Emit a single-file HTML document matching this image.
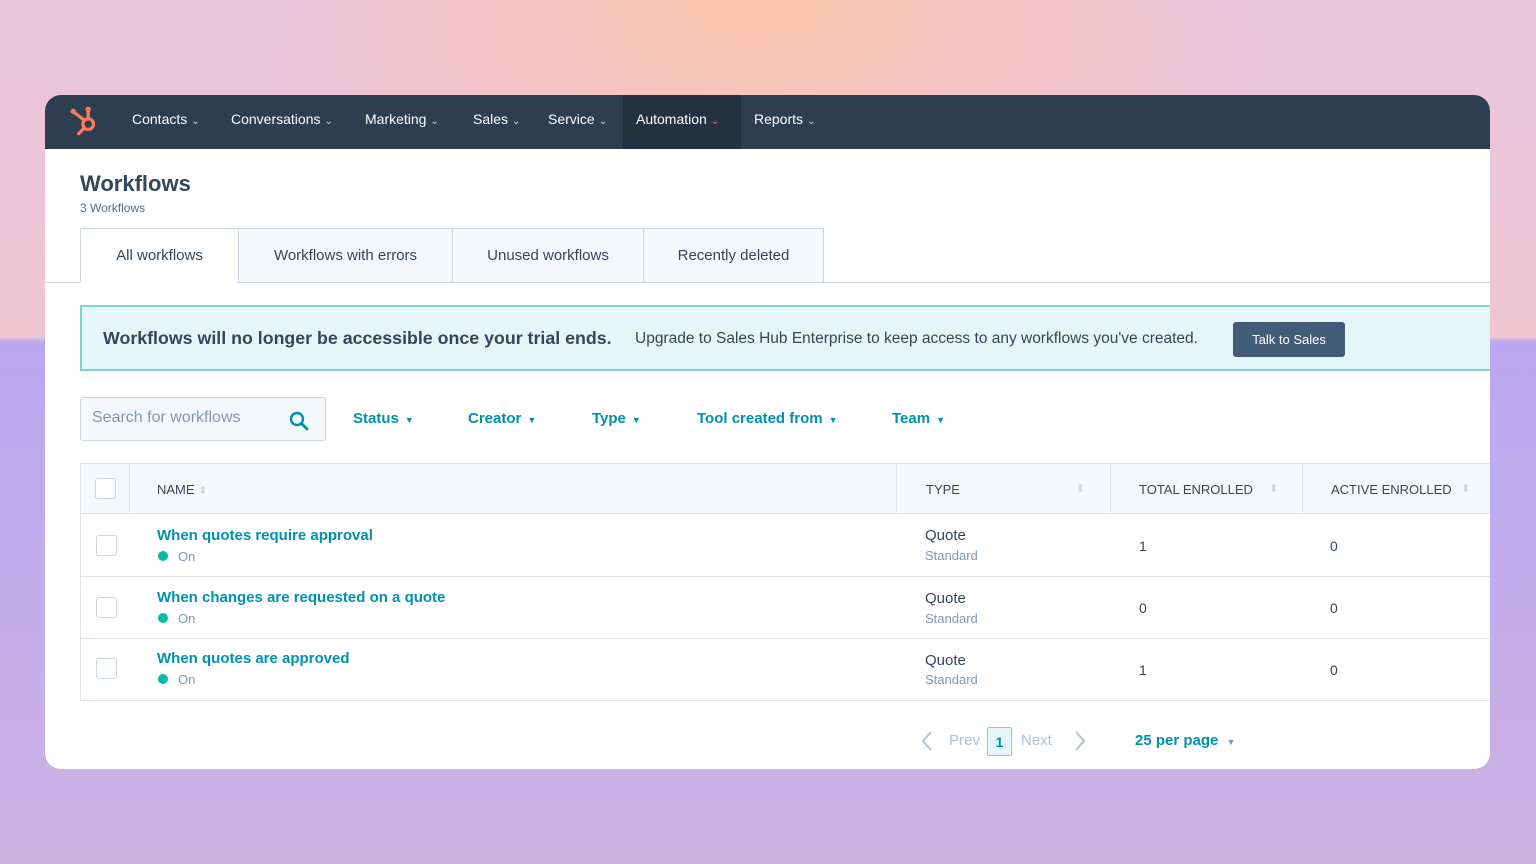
<!DOCTYPE html>
<html><head><meta charset="utf-8"><style>
*{margin:0;padding:0;box-sizing:border-box}
body{width:1536px;height:864px;overflow:hidden;font-family:"Liberation Sans",sans-serif;position:relative;
background:linear-gradient(180deg,#e9c4dc 0%,#efc6d2 39%,#b9a8f0 39.6%,#c3acea 70%,#cdb2e2 100%);}
.topglow{position:absolute;left:0;top:0;width:1536px;height:342px;background:radial-gradient(ellipse 520px 300px at 760px 0,#fcc7a8 0%,rgba(248,196,180,0.6) 45%,rgba(233,196,220,0) 100%);}
.a{position:absolute}
.card{left:45px;top:95px;width:1445px;height:674px;background:#fff;border-radius:16px;overflow:hidden}
.nav{left:0;top:0;width:1445px;height:54px;background:#2d3e50}
.nav span{position:absolute;top:16px;color:#fff;font-size:14px}
.nav span i{font-style:normal;font-size:10px;color:#cbd6e2;margin-left:4px}
.tab{top:133px;height:55px;border:1px solid #cbd6e2;background:#f5f8fa;color:#33475b;font-size:15px;display:flex;align-items:center;justify-content:center}
.th{font-size:13px;color:#33475b;top:387px}
.cb{width:21px;height:21px;border:1px solid #cbd6e2;border-radius:3px;background:#fff}
.row{left:35px;width:1410px;border-bottom:1px solid #dfe3eb}
.nm{font-size:15px;color:#0091ae;font-weight:bold}
.on{font-size:13px;color:#7c98b6}
.dot{display:inline-block;width:10px;height:10px;border-radius:50%;background:#00bda5;margin-right:10px}
.q{font-size:15px;color:#33475b}
.st{font-size:13px;color:#7c98b6}
.num{font-size:14px;color:#33475b}
.f{top:315px;font-size:15px;color:#0091ae;font-weight:bold}
.f i{font-style:normal;font-size:9px;margin-left:6px}
.so{color:#cbd6e2;font-size:11px}
</style></head><body>
<div class="topglow"></div>
<div class="a card">
 <div class="a nav">
  <svg class="a" style="left:23px;top:9px" width="34" height="34" viewBox="0 0 32 32"><g fill="none" stroke="#ff7a59" stroke-width="3" stroke-linecap="round"><circle cx="19" cy="19" r="5"/><path d="M19 14V6M15 15 6 8M15 23l-5 5"/></g><circle cx="19" cy="5" r="2.5" fill="#ff7a59"/><circle cx="5" cy="7" r="2.5" fill="#ff7a59"/></svg>
  <span style="left:87px">Contacts<i>⌄</i></span>
  <span style="left:186px">Conversations<i>⌄</i></span>
  <span style="left:320px">Marketing<i>⌄</i></span>
  <span style="left:428px">Sales<i>⌄</i></span>
  <span style="left:503px">Service<i>⌄</i></span>
  <div class="a" style="left:578px;top:0;width:118px;height:54px;background:#233140"></div>
  <span style="left:591px">Automation<i style="color:#ff7a59">⌄</i></span>
  <span style="left:709px">Reports<i>⌄</i></span>
 </div>
 <div class="a" style="left:35px;top:76px;font-size:22px;color:#33475b;font-weight:600">Workflows</div>
 <div class="a" style="left:35px;top:106px;font-size:12px;color:#516f90">3 Workflows</div>
 <div class="a" style="left:0;top:187px;width:1445px;height:1px;background:#cbd6e2"></div>
 <div class="a tab" style="left:35px;width:159px;background:#fff;border-bottom:1px solid #fff">All workflows</div>
 <div class="a tab" style="left:193px;width:215px">Workflows with errors</div>
 <div class="a tab" style="left:407px;width:192px">Unused workflows</div>
 <div class="a tab" style="left:598px;width:181px">Recently deleted</div>
 <div class="a" style="left:35px;top:210px;width:1420px;height:66px;background:#e5f5f8;border:2px solid #7fd1de;border-right:none"></div>
 <div class="a" style="left:58px;top:233px;font-size:17.8px;font-weight:bold;color:#33475b">Workflows will no longer be accessible once your trial ends.</div>
 <div class="a" style="left:590px;top:235px;font-size:15.5px;color:#33475b">Upgrade to Sales Hub Enterprise to keep access to any workflows you've created.</div>
 <div class="a" style="left:1188px;top:227px;width:112px;height:35px;background:#425b76;border-radius:3px;color:#fff;font-size:13px;display:flex;align-items:center;justify-content:center">Talk to Sales</div>
 <div class="a" style="left:35px;top:302px;width:246px;height:44px;border:1px solid #cbd6e2;border-radius:3px;background:#f5f8fa"></div>
 <div class="a" style="left:47px;top:314px;font-size:16px;color:#7c98b6">Search for workflows</div>
 <svg class="a" style="left:244px;top:316px" width="20" height="20" viewBox="0 0 20 20"><circle cx="8" cy="8" r="6" fill="none" stroke="#0091ae" stroke-width="2.4"/><path d="M12.5 12.5 18 18" stroke="#0091ae" stroke-width="2.8" stroke-linecap="round"/></svg>
 <div class="a f" style="left:308px">Status<i>▼</i></div>
 <div class="a f" style="left:423px">Creator<i>▼</i></div>
 <div class="a f" style="left:547px">Type<i>▼</i></div>
 <div class="a f" style="left:652px">Tool created from<i>▼</i></div>
 <div class="a f" style="left:847px">Team<i>▼</i></div>
 <div class="a" style="left:35px;top:368px;width:1410px;height:51px;background:#f5f8fa;border:1px solid #dfe3eb;border-right:none"></div>
 <div class="a" style="left:84px;top:369px;width:1px;height:49px;background:#dfe3eb"></div>
 <div class="a" style="left:851px;top:369px;width:1px;height:49px;background:#dfe3eb"></div>
 <div class="a" style="left:1065px;top:369px;width:1px;height:49px;background:#dfe3eb"></div>
 <div class="a" style="left:1257px;top:369px;width:1px;height:49px;background:#dfe3eb"></div>
 <div class="a cb" style="left:50px;top:383px"></div>
 <div class="a th" style="left:112px">NAME <span class="so">⬍</span></div>
 <div class="a th" style="left:881px">TYPE</div><div class="a th so" style="left:1031px">⬍</div>
 <div class="a th" style="left:1094px">TOTAL ENROLLED</div><div class="a th so" style="left:1224px">⬍</div>
 <div class="a th" style="left:1286px">ACTIVE ENROLLED</div><div class="a th so" style="left:1416px">⬍</div>
 <div class="a" style="left:35px;top:419px;width:1px;height:187px;background:#dfe3eb"></div>

 <div class="a row" style="top:419px;height:63px"></div>
 <div class="a cb" style="left:51px;top:440px"></div>
 <div class="a nm" style="left:112px;top:432px">When quotes require approval</div>
 <div class="a on" style="left:113px;top:454px"><span class="dot"></span>On</div>
 <div class="a q" style="left:880px;top:432px">Quote</div><div class="a st" style="left:880px;top:453px">Standard</div>
 <div class="a num" style="left:1094px;top:443px">1</div><div class="a num" style="left:1285px;top:443px">0</div>

 <div class="a row" style="top:482px;height:62px"></div>
 <div class="a cb" style="left:51px;top:502px"></div>
 <div class="a nm" style="left:112px;top:494px">When changes are requested on a quote</div>
 <div class="a on" style="left:113px;top:516px"><span class="dot"></span>On</div>
 <div class="a q" style="left:880px;top:495px">Quote</div><div class="a st" style="left:880px;top:516px">Standard</div>
 <div class="a num" style="left:1094px;top:505px">0</div><div class="a num" style="left:1285px;top:505px">0</div>

 <div class="a row" style="top:544px;height:62px"></div>
 <div class="a cb" style="left:51px;top:563px"></div>
 <div class="a nm" style="left:112px;top:555px">When quotes are approved</div>
 <div class="a on" style="left:113px;top:577px"><span class="dot"></span>On</div>
 <div class="a q" style="left:880px;top:557px">Quote</div><div class="a st" style="left:880px;top:577px">Standard</div>
 <div class="a num" style="left:1094px;top:567px">1</div><div class="a num" style="left:1285px;top:567px">0</div>

 <svg class="a" style="left:874px;top:635px" width="16" height="22" viewBox="0 0 16 22"><path d="M12 2 4 11l8 9" fill="none" stroke="#b0c1d4" stroke-width="2"/></svg>
 <div class="a" style="left:904px;top:637px;font-size:15px;color:#b0c1d4">Prev</div>
 <div class="a" style="left:942px;top:632px;width:25px;height:29px;border:1px solid #7fd1de;background:#e5f5f8;border-radius:2px;color:#0091ae;font-size:14px;font-weight:bold;display:flex;align-items:center;justify-content:center">1</div>
 <div class="a" style="left:976px;top:637px;font-size:15px;color:#b0c1d4">Next</div>
 <svg class="a" style="left:1027px;top:635px" width="16" height="22" viewBox="0 0 16 22"><path d="M4 2l8 9-8 9" fill="none" stroke="#b0c1d4" stroke-width="2"/></svg>
 <div class="a" style="left:1090px;top:637px;font-size:15px;color:#0091ae;font-weight:bold">25 per page <span style="font-size:9px;color:#7c98b6;margin-left:4px">▼</span></div>
</div>
</body></html>
